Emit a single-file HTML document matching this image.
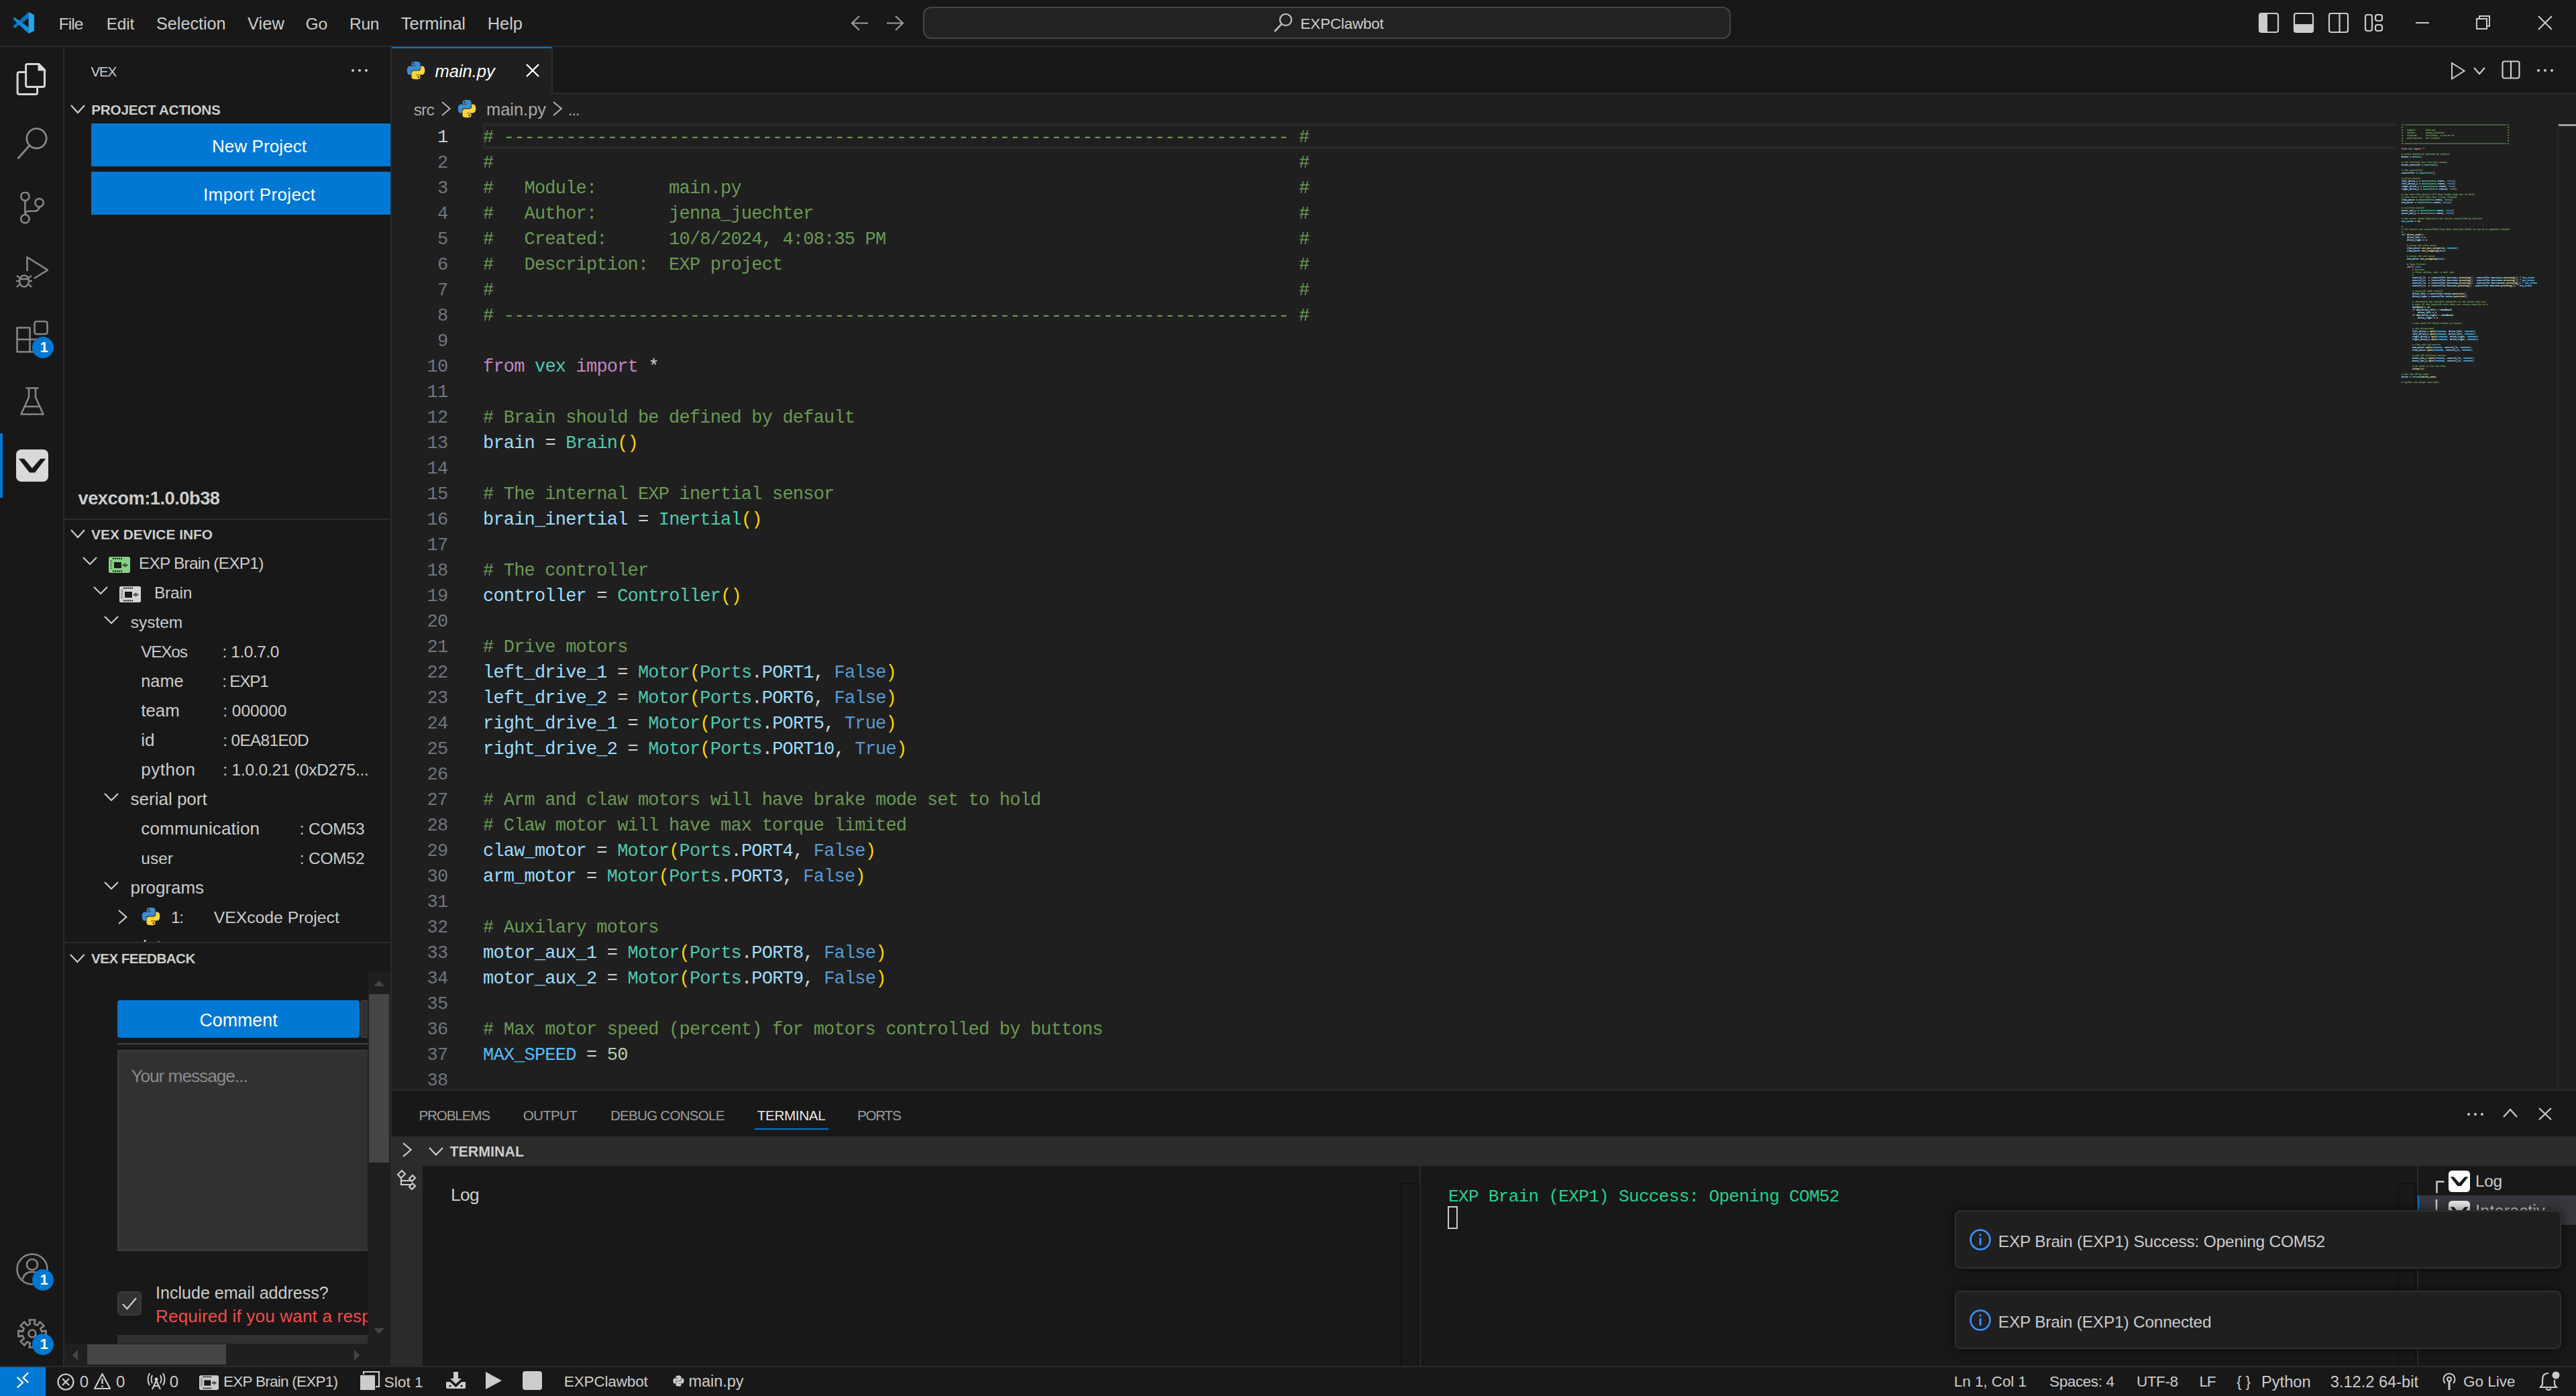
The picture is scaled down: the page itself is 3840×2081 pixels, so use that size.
<!DOCTYPE html><html><head><meta charset="utf-8"><style>
html,body{margin:0;padding:0;}
body{width:3840px;height:2081px;overflow:hidden;background:#181818;position:relative;}
.r{position:absolute;display:block;}
.t{position:absolute;white-space:pre;}
.s{font-family:"Liberation Sans",sans-serif;}
.m{font-family:"Liberation Mono",monospace;}
</style></head><body><div class="r" style="left:0px;top:0px;width:3840px;height:68px;background:#181818;"></div><div class="r" style="left:0px;top:68px;width:3840px;height:2px;background:#2b2b2b;"></div><svg class="r" style="left:14px;top:14px;" width="42" height="42" viewBox="0 0 42 42" fill="none">
      <polygon points="28.6,3.9 28.6,12.9 8,28 5.1,25.3" fill="#0a74c0"/>
      <polygon points="8,12 28.6,26.8 28.6,36 5.1,14.1" fill="#138ad9"/>
      <polygon points="28.6,3.9 36.9,8.1 36.9,31.9 28.6,36" fill="#23a4f0"/>
    </svg><div class="t s" style="left:87.80px;top:20.03px;font-size:24.44px;line-height:31px;color:#cccccc;letter-spacing:-0.967px;">File</div><div class="t s" style="left:158.70px;top:20.03px;font-size:24.44px;line-height:31px;color:#cccccc;letter-spacing:-0.150px;">Edit</div><div class="t s" style="left:233.00px;top:19.77px;font-size:25.19px;line-height:31px;color:#cccccc;letter-spacing:-0.006px;">Selection</div><div class="t s" style="left:369.00px;top:19.17px;font-size:25.47px;line-height:32px;color:#cccccc;letter-spacing:0.017px;">View</div><div class="t s" style="left:455.50px;top:19.98px;font-size:24.58px;line-height:31px;color:#cccccc;letter-spacing:0.000px;">Go</div><div class="t s" style="left:521.00px;top:20.03px;font-size:24.44px;line-height:31px;color:#cccccc;letter-spacing:-0.225px;">Run</div><div class="t s" style="left:597.80px;top:19.17px;font-size:25.46px;line-height:32px;color:#cccccc;letter-spacing:0.007px;">Terminal</div><div class="t s" style="left:726.80px;top:19.20px;font-size:25.39px;line-height:32px;color:#cccccc;letter-spacing:-0.017px;">Help</div><svg class="r" style="left:1268px;top:23px;" width="28" height="24" viewBox="0 0 28 24" fill="none"><path d="M13 1 L2 11.5 L13 22 M2 11.5 H26" stroke="#9d9d9d" stroke-width="2.2" fill="none"/></svg><svg class="r" style="left:1320px;top:23px;" width="28" height="24" viewBox="0 0 28 24" fill="none"><path d="M15 1 L26 11.5 L15 22 M26 11.5 H2" stroke="#9d9d9d" stroke-width="2.2" fill="none"/></svg><div class="r" style="left:1376px;top:10px;width:1200px;height:44px;background:#222222;border:2px solid #464646;border-radius:12px;"></div><svg class="r" style="left:1898px;top:18px;" width="30" height="32" viewBox="0 0 30 32" fill="none"><circle cx="18.6" cy="11.4" r="8.6" stroke="#bdbdbd" stroke-width="2.3"/><path d="M12.6 17.6 L2 29" stroke="#bdbdbd" stroke-width="2.6"/></svg><div class="t s" style="left:1938.60px;top:21.98px;font-size:22.56px;line-height:28px;color:#cccccc;letter-spacing:-0.267px;">EXPClawbot</div><svg class="r" style="left:3366px;top:18px;" width="32" height="32" viewBox="0 0 32 32" fill="none"><rect x="2" y="2" width="28" height="28" rx="3" stroke="#cccccc" stroke-width="2.2"/><rect x="2" y="2" width="12" height="28" rx="3" fill="#cccccc"/><rect x="8" y="2" width="6" height="28" fill="#cccccc"/></svg><svg class="r" style="left:3418px;top:18px;" width="32" height="32" viewBox="0 0 32 32" fill="none"><rect x="2" y="2" width="28" height="28" rx="3" stroke="#cccccc" stroke-width="2.2"/><rect x="2" y="18" width="28" height="12" rx="3" fill="#cccccc"/><rect x="2" y="18" width="28" height="6" fill="#cccccc"/></svg><svg class="r" style="left:3470px;top:18px;" width="32" height="32" viewBox="0 0 32 32" fill="none"><rect x="2" y="2" width="28" height="28" rx="3" stroke="#cccccc" stroke-width="2.2"/><path d="M17.5 2 V30" stroke="#cccccc" stroke-width="2.2"/></svg><svg class="r" style="left:3524px;top:18px;" width="30" height="32" viewBox="0 0 30 32" fill="none"><rect x="2" y="4" width="10" height="24" rx="3" stroke="#cccccc" stroke-width="2.2"/><rect x="17" y="4" width="10" height="9" rx="3" stroke="#cccccc" stroke-width="2.2"/><rect x="17" y="19" width="10" height="9" rx="3" stroke="#cccccc" stroke-width="2.2"/></svg><div class="r" style="left:3601px;top:33px;width:20px;height:2px;background:#cccccc;"></div><svg class="r" style="left:3690px;top:22px;" width="24" height="24" viewBox="0 0 24 24" fill="none"><rect x="2" y="6" width="15" height="15" stroke="#cccccc" stroke-width="2"/><path d="M6 6 V2 H21 V17 H17" stroke="#cccccc" stroke-width="2"/></svg><svg class="r" style="left:3782px;top:22px;" width="24" height="24" viewBox="0 0 24 24" fill="none"><path d="M2 2 L22 22 M22 2 L2 22" stroke="#cccccc" stroke-width="2"/></svg><div class="r" style="left:94px;top:70px;width:2px;height:1966px;background:#2b2b2b;"></div><svg class="r" style="left:24px;top:94px;" width="48" height="48" viewBox="0 0 48 48" fill="none"><path d="M17 1.6 H34 L42.5 10 V33 Q42.5 35.5 40 35.5 H17 Q14.6 35.5 14.6 33 V4 Q14.6 1.6 17 1.6 Z" stroke="#d7d7d7" stroke-width="3" stroke-linejoin="round"/>
      <path d="M33.5 1.6 V10.5 H42.5 Z" fill="#d7d7d7" stroke="#d7d7d7" stroke-width="2"/>
      <path d="M14.6 13.6 H5 Q2.1 13.6 2.1 16.5 V44.5 Q2.1 46.4 5 46.4 H29 Q31.6 46.4 31.6 44 V35.5" stroke="#d7d7d7" stroke-width="3"/></svg><svg class="r" style="left:24px;top:190px;" width="48" height="48" viewBox="0 0 48 48" fill="none"><circle cx="30.5" cy="16.3" r="14.7" stroke="#868686" stroke-width="2.8"/><path d="M20 27 L2.5 46.5" stroke="#868686" stroke-width="3"/></svg><svg class="r" style="left:24px;top:286px;" width="48" height="48" viewBox="0 0 48 48" fill="none"><circle cx="13.4" cy="6.9" r="6.2" stroke="#868686" stroke-width="2.6"/><circle cx="34.6" cy="16.3" r="6.2" stroke="#868686" stroke-width="2.6"/>
      <circle cx="13.4" cy="40.2" r="6.2" stroke="#868686" stroke-width="2.6"/><path d="M13.4 13.1 V34" stroke="#868686" stroke-width="2.6"/>
      <path d="M34.6 22.5 Q34 28.7 27 28.7 H19 Q13.4 28.7 13.4 34" stroke="#868686" stroke-width="2.6"/></svg><svg class="r" style="left:24px;top:382px;" width="48" height="48" viewBox="0 0 48 48" fill="none"><path d="M16.5 22 V1.5 L47 20.5 L27 33" stroke="#868686" stroke-width="2.6" stroke-linejoin="miter"/>
      <ellipse cx="12" cy="37" rx="7" ry="8.5" stroke="#868686" stroke-width="2.6"/><path d="M5 34 H19" stroke="#868686" stroke-width="2.6"/>
      <path d="M0 37 H4 M20 37 H24 M1 29 L5 32 M23 29 L19 32 M1 46 L5 42 M23 46 L19 42" stroke="#868686" stroke-width="2.4"/></svg><svg class="r" style="left:24px;top:478px;" width="48" height="48" viewBox="0 0 48 48" fill="none"><path d="M1.5 10.5 H20.5 V28 H38 V46.5 H1.5 Z M1.5 28 H20.5 V46.5" stroke="#868686" stroke-width="2.6" stroke-linejoin="round"/>
      <rect x="27.5" y="1" width="19" height="19" rx="3" stroke="#868686" stroke-width="2.6"/></svg><div class="r" style="left:48px;top:502px;width:32px;height:32px;border-radius:16px;background:#0078d4;"></div><div class="t s" style="left:59.50px;top:504.37px;font-size:22px;line-height:28px;color:#ffffff;font-weight:700;">1</div><svg class="r" style="left:24px;top:574px;" width="48" height="48" viewBox="0 0 48 48" fill="none"><path d="M14.5 4.5 H33.5 M19 4.5 V18 L7.5 43.5 H40.5 L29 18 V4.5" stroke="#868686" stroke-width="2.6" stroke-linejoin="round"/>
      <path d="M12 32 H36" stroke="#868686" stroke-width="2.6"/></svg><div class="r" style="left:0px;top:646px;width:4px;height:96px;background:#0078d4;"></div><svg class="r" style="left:24px;top:670px;" width="48" height="48" viewBox="0 0 48 48" fill="none"><rect x="0" y="0" width="48" height="48" rx="7.7" fill="#d9d9d9"/><path d="M3.9 13.8 H11.9 L23.9 27.9 L36.4 13.8 H44.1 L28 34.6 H20 Z" fill="#181818"/></svg><svg class="r" style="left:24px;top:1868px;" width="48" height="48" viewBox="0 0 48 48" fill="none"><circle cx="24" cy="24" r="22.5" stroke="#868686" stroke-width="2.6"/><circle cx="24" cy="17" r="8" stroke="#868686" stroke-width="2.6"/>
      <path d="M10 39 Q12 28 24 28 Q36 28 38 39" stroke="#868686" stroke-width="2.6"/></svg><div class="r" style="left:48px;top:1892px;width:32px;height:32px;border-radius:16px;background:#0078d4;"></div><div class="t s" style="left:59.50px;top:1894.37px;font-size:22px;line-height:28px;color:#ffffff;font-weight:700;">1</div><svg class="r" style="left:24px;top:1964px;" width="48" height="48" viewBox="0 0 48 48" fill="none"><polygon points="44.54,19.63 44.54,28.37 38.16,27.14 36.23,31.79 41.61,35.44 35.44,41.61 31.79,36.23 27.14,38.16 28.37,44.54 19.63,44.54 20.86,38.16 16.21,36.23 12.56,41.61 6.39,35.44 11.77,31.79 9.84,27.14 3.46,28.37 3.46,19.63 9.84,20.86 11.77,16.21 6.39,12.56 12.56,6.39 16.21,11.77 20.86,9.84 19.63,3.46 28.37,3.46 27.14,9.84 31.79,11.77 35.44,6.39 41.61,12.56 36.23,16.21 38.16,20.86" stroke="#868686" stroke-width="2.6" stroke-linejoin="round"/><circle cx="24" cy="24" r="5.5" stroke="#868686" stroke-width="2.6"/></svg><div class="r" style="left:48px;top:1988px;width:32px;height:32px;border-radius:16px;background:#0078d4;"></div><div class="t s" style="left:59.50px;top:1990.37px;font-size:22px;line-height:28px;color:#ffffff;font-weight:700;">1</div><div class="r" style="left:582px;top:70px;width:2px;height:1966px;background:#2b2b2b;"></div><div class="t s" style="left:135.60px;top:94.13px;font-size:20.68px;line-height:26px;color:#cccccc;letter-spacing:-1.300px;">VEX</div><div class="r" style="left:523.8px;top:102.8px;width:4.4px;height:4.4px;border-radius:50%;background:#cccccc;"></div><div class="r" style="left:533.8px;top:102.8px;width:4.4px;height:4.4px;border-radius:50%;background:#cccccc;"></div><div class="r" style="left:543.8px;top:102.8px;width:4.4px;height:4.4px;border-radius:50%;background:#cccccc;"></div><svg class="r" style="left:104px;top:155px;" width="24" height="15" viewBox="0 0 24 15" fill="none"><path d="M2 2 L12.0 13.0 L22.0 2" stroke="#cccccc" stroke-width="2.2" fill="none"/></svg><div class="t s" style="left:136.30px;top:151.33px;font-size:20.68px;line-height:26px;color:#cccccc;font-weight:700;letter-spacing:-0.229px;">PROJECT ACTIONS</div><div class="r" style="left:136px;top:184px;width:446px;height:64px;background:#0078d4;"></div><div class="t s" style="left:316.00px;top:201.99px;font-size:26px;line-height:32px;color:#ffffff;letter-spacing:0.085px;">New Project</div><div class="r" style="left:136px;top:256px;width:446px;height:64px;background:#0078d4;"></div><div class="t s" style="left:303.00px;top:273.99px;font-size:26px;line-height:32px;color:#ffffff;letter-spacing:0.396px;">Import Project</div><div class="t s" style="left:116.50px;top:726.05px;font-size:27.26px;line-height:34px;color:#cccccc;font-weight:700;letter-spacing:-0.475px;">vexcom:1.0.0b38</div><div class="r" style="left:96px;top:773px;width:486px;height:2px;background:#2b2b2b;"></div><svg class="r" style="left:104px;top:788px;" width="24" height="15" viewBox="0 0 24 15" fill="none"><path d="M2 2 L12.0 13.0 L22.0 2" stroke="#cccccc" stroke-width="2.2" fill="none"/></svg><div class="t s" style="left:136.10px;top:783.76px;font-size:20.89px;line-height:26px;color:#cccccc;font-weight:700;letter-spacing:-0.004px;">VEX DEVICE INFO</div><div class="r" style="left:0;top:819px;width:582px;height:585px;overflow:hidden;"><div class="r" style="left:0;top:-819px;width:582px;height:2081px;"><svg class="r" style="left:122px;top:829px;" width="24" height="14" viewBox="0 0 24 14" fill="none"><path d="M2 2 L12.0 12.0 L22.0 2" stroke="#cccccc" stroke-width="2.2" fill="none"/></svg><svg class="r" style="left:162px;top:830px;" width="32" height="24" viewBox="0 0 32 24" fill="none"><rect x="0" y="0" width="32" height="24" rx="2.5" fill="#89d185"/><rect x="6" y="1.6" width="2" height="2" fill="#111"/><rect x="6" y="20.4" width="2" height="2" fill="#111"/><rect x="9" y="1.6" width="2" height="2" fill="#111"/><rect x="9" y="20.4" width="2" height="2" fill="#111"/><rect x="12" y="1.6" width="2" height="2" fill="#111"/><rect x="12" y="20.4" width="2" height="2" fill="#111"/><rect x="15" y="1.6" width="2" height="2" fill="#111"/><rect x="15" y="20.4" width="2" height="2" fill="#111"/><rect x="18" y="1.6" width="2" height="2" fill="#111"/><rect x="18" y="20.4" width="2" height="2" fill="#111"/><rect x="2.2" y="5.0" width="3" height="1" fill="#555"/><rect x="2.2" y="7.4" width="3" height="1" fill="#555"/><rect x="2.2" y="9.8" width="3" height="1" fill="#555"/><rect x="2.2" y="12.2" width="3" height="1" fill="#555"/><rect x="2.2" y="14.6" width="3" height="1" fill="#555"/><rect x="2.2" y="17.0" width="3" height="1" fill="#555"/>
<rect x="8" y="8" width="11" height="9" fill="#1a1a1a"/>
<path d="M24.5 9.5 L26 11 L24.5 12.5 L23 11 Z M24.5 12.5 L26 14 L24.5 15.5 L23 14 Z M22 11 L23.5 12.5 L22 14 L20.5 12.5 Z M27 11 L28.5 12.5 L27 14 L25.5 12.5 Z" fill="#1a1a1a"/></svg><div class="t s" style="left:206.90px;top:824.03px;font-size:24.44px;line-height:31px;color:#cccccc;letter-spacing:-0.763px;">EXP Brain (EXP1)</div><svg class="r" style="left:138px;top:873px;" width="24" height="14" viewBox="0 0 24 14" fill="none"><path d="M2 2 L12.0 12.0 L22.0 2" stroke="#cccccc" stroke-width="2.2" fill="none"/></svg><svg class="r" style="left:178px;top:874px;" width="32" height="24" viewBox="0 0 32 24" fill="none"><rect x="0" y="0" width="32" height="24" rx="2.5" fill="#d4d4d4"/><rect x="6" y="1.6" width="2" height="2" fill="#111"/><rect x="6" y="20.4" width="2" height="2" fill="#111"/><rect x="9" y="1.6" width="2" height="2" fill="#111"/><rect x="9" y="20.4" width="2" height="2" fill="#111"/><rect x="12" y="1.6" width="2" height="2" fill="#111"/><rect x="12" y="20.4" width="2" height="2" fill="#111"/><rect x="15" y="1.6" width="2" height="2" fill="#111"/><rect x="15" y="20.4" width="2" height="2" fill="#111"/><rect x="18" y="1.6" width="2" height="2" fill="#111"/><rect x="18" y="20.4" width="2" height="2" fill="#111"/><rect x="2.2" y="5.0" width="3" height="1" fill="#555"/><rect x="2.2" y="7.4" width="3" height="1" fill="#555"/><rect x="2.2" y="9.8" width="3" height="1" fill="#555"/><rect x="2.2" y="12.2" width="3" height="1" fill="#555"/><rect x="2.2" y="14.6" width="3" height="1" fill="#555"/><rect x="2.2" y="17.0" width="3" height="1" fill="#555"/>
<rect x="8" y="8" width="11" height="9" fill="#1a1a1a"/>
<path d="M24.5 9.5 L26 11 L24.5 12.5 L23 11 Z M24.5 12.5 L26 14 L24.5 15.5 L23 14 Z M22 11 L23.5 12.5 L22 14 L20.5 12.5 Z M27 11 L28.5 12.5 L27 14 L25.5 12.5 Z" fill="#1a1a1a"/></svg><div class="t s" style="left:230.00px;top:868.03px;font-size:24.44px;line-height:31px;color:#cccccc;letter-spacing:-0.175px;">Brain</div><svg class="r" style="left:154px;top:917px;" width="24" height="14" viewBox="0 0 24 14" fill="none"><path d="M2 2 L12.0 12.0 L22.0 2" stroke="#cccccc" stroke-width="2.2" fill="none"/></svg><div class="t s" style="left:194.70px;top:912.01px;font-size:24.5px;line-height:31px;color:#cccccc;letter-spacing:0.000px;">system</div><div class="t s" style="left:210.30px;top:956.03px;font-size:24.44px;line-height:31px;color:#cccccc;letter-spacing:-1.288px;">VEXos</div><div class="t s" style="left:331.60px;top:956.03px;font-size:24.44px;line-height:31px;color:#cccccc;letter-spacing:-0.431px;">: 1.0.7.0</div><div class="t s" style="left:210.30px;top:999.24px;font-size:25.26px;line-height:32px;color:#cccccc;letter-spacing:0.017px;">name</div><div class="t s" style="left:331.35px;top:1000.03px;font-size:24.44px;line-height:31px;color:#cccccc;letter-spacing:-1.300px;">: EXP1</div><div class="t s" style="left:210.30px;top:1043.05px;font-size:25.82px;line-height:32px;color:#cccccc;letter-spacing:0.017px;">team</div><div class="t s" style="left:332.30px;top:1044.03px;font-size:24.44px;line-height:31px;color:#cccccc;letter-spacing:-0.007px;">: 000000</div><div class="t s" style="left:210.30px;top:1086.99px;font-size:26px;line-height:32px;color:#cccccc;letter-spacing:0.050px;">id</div><div class="t s" style="left:332.30px;top:1088.03px;font-size:24.44px;line-height:31px;color:#cccccc;letter-spacing:-0.694px;">: 0EA81E0D</div><div class="t s" style="left:210.30px;top:1130.99px;font-size:26px;line-height:32px;color:#cccccc;letter-spacing:0.530px;">python</div><div class="t s" style="left:332.30px;top:1132.03px;font-size:24.44px;line-height:31px;color:#cccccc;letter-spacing:-0.193px;">: 1.0.0.21 (0xD275...</div><svg class="r" style="left:154px;top:1181px;" width="24" height="14" viewBox="0 0 24 14" fill="none"><path d="M2 2 L12.0 12.0 L22.0 2" stroke="#cccccc" stroke-width="2.2" fill="none"/></svg><div class="t s" style="left:194.50px;top:1174.99px;font-size:26px;line-height:32px;color:#cccccc;letter-spacing:0.005px;">serial port</div><div class="t s" style="left:210.30px;top:1218.99px;font-size:26px;line-height:32px;color:#cccccc;letter-spacing:0.154px;">communication</div><div class="t s" style="left:446.80px;top:1220.03px;font-size:24.44px;line-height:31px;color:#cccccc;letter-spacing:-0.183px;">: COM53</div><div class="t s" style="left:210.30px;top:1264.00px;font-size:24.51px;line-height:31px;color:#cccccc;letter-spacing:0.017px;">user</div><div class="t s" style="left:446.80px;top:1264.03px;font-size:24.44px;line-height:31px;color:#cccccc;letter-spacing:-0.183px;">: COM52</div><svg class="r" style="left:154px;top:1313px;" width="24" height="14" viewBox="0 0 24 14" fill="none"><path d="M2 2 L12.0 12.0 L22.0 2" stroke="#cccccc" stroke-width="2.2" fill="none"/></svg><div class="t s" style="left:194.50px;top:1307.02px;font-size:25.91px;line-height:32px;color:#cccccc;letter-spacing:-0.000px;">programs</div><svg class="r" style="left:175px;top:1355px;" width="15" height="24" viewBox="0 0 15 24" fill="none"><path d="M2 2 L13.3 12.0 L2 22.0" stroke="#cccccc" stroke-width="2.2" fill="none"/></svg><svg class="r" style="left:211px;top:1352px;" width="28" height="28" viewBox="0 0 24 24" fill="none">
<path d="M11.9 0.6C6.1 0.6 6.5 3.1 6.5 3.1V5.7H12V6.5H4.3C4.3 6.5 0.6 6.1 0.6 11.9C0.6 17.7 3.8 17.5 3.8 17.5H5.8V14.8C5.8 14.8 5.7 11.6 9 11.6H14.5C14.5 11.6 17.6 11.6 17.6 8.6V3.6C17.6 3.6 18 0.6 11.9 0.6ZM8.9 2.3A1 1 0 1 1 8.9 4.3A1 1 0 1 1 8.9 2.3Z" fill="#3c8dcf"/>
<path d="M12.1 23.4C17.9 23.4 17.5 20.9 17.5 20.9V18.3H12V17.5H19.7C19.7 17.5 23.4 17.9 23.4 12.1C23.4 6.3 20.2 6.5 20.2 6.5H18.2V9.2C18.2 9.2 18.3 12.4 15 12.4H9.5C9.5 12.4 6.4 12.4 6.4 15.4V20.4C6.4 20.4 6 23.4 12.1 23.4ZM15.1 21.7A1 1 0 1 1 15.1 19.7A1 1 0 1 1 15.1 21.7Z" fill="#ffd43b"/>
</svg><div class="t s" style="left:254.95px;top:1352.03px;font-size:24.44px;line-height:31px;color:#cccccc;letter-spacing:-1.300px;">1:</div><div class="t s" style="left:318.70px;top:1351.92px;font-size:24.75px;line-height:31px;color:#cccccc;letter-spacing:0.000px;">VEXcode Project</div><div class="t s" style="left:200.00px;top:1394.99px;font-size:26px;line-height:32px;color:#cccccc;">slot</div></div></div><div class="r" style="left:96px;top:1404px;width:486px;height:2px;background:#2b2b2b;"></div><svg class="r" style="left:103px;top:1421px;" width="24" height="15" viewBox="0 0 24 15" fill="none"><path d="M2 2 L12.3 13.0 L22.6 2" stroke="#cccccc" stroke-width="2.2" fill="none"/></svg><div class="t s" style="left:136.00px;top:1415.83px;font-size:20.68px;line-height:26px;color:#cccccc;font-weight:700;letter-spacing:-0.600px;">VEX FEEDBACK</div><div class="r" style="left:96px;top:1448px;width:452px;height:555px;overflow:hidden;"><div class="r" style="left:-96px;top:-1448px;width:582px;height:2081px;"><div class="r" style="left:175px;top:1491px;width:361px;height:56px;background:#0078d4;border-radius:4px;"></div><div class="t s" style="left:297.50px;top:1505.22px;font-size:26.77px;line-height:33px;color:#ffffff;letter-spacing:0.008px;">Comment</div><div class="r" style="left:537px;top:1491px;width:30px;height:52px;background:#313131;border:2px solid #3c3c3c;border-radius:4px;"></div><div class="r" style="left:175px;top:1555px;width:373px;height:2px;background:#454545;"></div><div class="r" style="left:175px;top:1565px;width:400px;height:296px;background:#313131;border:2px solid #3c3c3c;"></div><div class="t s" style="left:195.40px;top:1588.38px;font-size:26.32px;line-height:33px;color:#8b8b8b;letter-spacing:-1.057px;">Your message...</div><div class="r" style="left:175px;top:1925px;width:32px;height:32px;background:#313131;border:2px solid #3c3c3c;border-radius:6px;"></div><svg class="r" style="left:179px;top:1929px;" width="28" height="28" viewBox="0 0 28 28" fill="none"><path d="M4 15 L10.5 22 L24 6" stroke="#cccccc" stroke-width="2.2" fill="none"/></svg><div class="t s" style="left:232.00px;top:1911.80px;font-size:25.09px;line-height:31px;color:#cccccc;letter-spacing:-0.005px;">Include email address?</div><div class="t s" style="left:232.00px;top:1946.49px;font-size:26px;line-height:32px;color:#f14c4c;letter-spacing:0.2px;">Required if you want a response</div><div class="r" style="left:175px;top:1990px;width:425px;height:13px;background:#313131;"></div></div></div><div class="r" style="left:548px;top:1448px;width:34px;height:555px;background:#1f1f1f;"></div><svg class="r" style="left:556px;top:1461px;" width="18" height="10" viewBox="0 0 18 10" fill="none"><path d="M1 9 L9 1 L17 9 Z" fill="#454545"/></svg><div class="r" style="left:550px;top:1482px;width:30px;height:251px;background:#454545;"></div><svg class="r" style="left:556px;top:1979px;" width="18" height="10" viewBox="0 0 18 10" fill="none"><path d="M1 1 L9 9 L17 1 Z" fill="#454545"/></svg><div class="r" style="left:96px;top:2003px;width:452px;height:33px;background:#1f1f1f;"></div><div class="r" style="left:130px;top:2004px;width:207px;height:30px;background:#454545;"></div><svg class="r" style="left:107px;top:2011px;" width="10" height="18" viewBox="0 0 10 18" fill="none"><path d="M9 1 L1 9 L9 17 Z" fill="#454545"/></svg><svg class="r" style="left:527px;top:2011px;" width="10" height="18" viewBox="0 0 10 18" fill="none"><path d="M1 1 L9 9 L1 17 Z" fill="#454545"/></svg><div class="r" style="left:548px;top:2003px;width:34px;height:33px;background:#1f1f1f;"></div><div class="r" style="left:584px;top:70px;width:3256px;height:68px;background:#181818;"></div><div class="r" style="left:584px;top:138px;width:3256px;height:2px;background:#2b2b2b;"></div><div class="r" style="left:584px;top:70px;width:238px;height:70px;background:#1f1f1f;"></div><div class="r" style="left:584px;top:70px;width:238px;height:2px;background:#0078d4;"></div><div class="r" style="left:822px;top:70px;width:2px;height:68px;background:#2b2b2b;"></div><svg class="r" style="left:606px;top:91px;" width="28" height="28" viewBox="0 0 24 24" fill="none">
<path d="M11.9 0.6C6.1 0.6 6.5 3.1 6.5 3.1V5.7H12V6.5H4.3C4.3 6.5 0.6 6.1 0.6 11.9C0.6 17.7 3.8 17.5 3.8 17.5H5.8V14.8C5.8 14.8 5.7 11.6 9 11.6H14.5C14.5 11.6 17.6 11.6 17.6 8.6V3.6C17.6 3.6 18 0.6 11.9 0.6ZM8.9 2.3A1 1 0 1 1 8.9 4.3A1 1 0 1 1 8.9 2.3Z" fill="#3c8dcf"/>
<path d="M12.1 23.4C17.9 23.4 17.5 20.9 17.5 20.9V18.3H12V17.5H19.7C19.7 17.5 23.4 17.9 23.4 12.1C23.4 6.3 20.2 6.5 20.2 6.5H18.2V9.2C18.2 9.2 18.3 12.4 15 12.4H9.5C9.5 12.4 6.4 12.4 6.4 15.4V20.4C6.4 20.4 6 23.4 12.1 23.4ZM15.1 21.7A1 1 0 1 1 15.1 19.7A1 1 0 1 1 15.1 21.7Z" fill="#ffd43b"/>
</svg><div class="t s" style="left:648.50px;top:89.77px;font-size:25.47px;line-height:32px;color:#ffffff;font-style:italic;letter-spacing:0.008px;">main.py</div><svg class="r" style="left:783px;top:94px;" width="22" height="22" viewBox="0 0 22 22" fill="none"><path d="M2 2 L20 20 M20 2 L2 20" stroke="#ffffff" stroke-width="2.4"/></svg><svg class="r" style="left:3651px;top:91px;" width="26" height="30" viewBox="0 0 26 30" fill="none"><path d="M4 3 V26.5 L22.5 14.75 Z" stroke="#cccccc" stroke-width="2" stroke-linejoin="miter" fill="none"/></svg><svg class="r" style="left:3686px;top:99px;" width="20" height="13" viewBox="0 0 20 13" fill="none"><path d="M2 2 L10.0 11.0 L18.0 2" stroke="#cccccc" stroke-width="2.2" fill="none"/></svg><svg class="r" style="left:3728px;top:89px;" width="30" height="30" viewBox="0 0 30 30" fill="none"><rect x="2.5" y="2.5" width="25" height="25" rx="3" stroke="#cccccc" stroke-width="2.2"/><path d="M15 2.5 V27.5" stroke="#cccccc" stroke-width="2.2"/></svg><div class="r" style="left:3781.8px;top:102.8px;width:4.4px;height:4.4px;border-radius:50%;background:#cccccc;"></div><div class="r" style="left:3791.8px;top:102.8px;width:4.4px;height:4.4px;border-radius:50%;background:#cccccc;"></div><div class="r" style="left:3801.8px;top:102.8px;width:4.4px;height:4.4px;border-radius:50%;background:#cccccc;"></div><div class="r" style="left:584px;top:140px;width:3256px;height:44px;background:#1f1f1f;"></div><div class="t s" style="left:616.70px;top:148.03px;font-size:24.44px;line-height:31px;color:#a9a9a9;letter-spacing:-0.800px;">src</div><svg class="r" style="left:657px;top:150px;" width="15" height="24" viewBox="0 0 15 24" fill="none"><path d="M2 2 L13.5 12.0 L2 22.0" stroke="#a9a9a9" stroke-width="2.2" fill="none"/></svg><svg class="r" style="left:682px;top:148px;" width="28" height="28" viewBox="0 0 24 24" fill="none">
<path d="M11.9 0.6C6.1 0.6 6.5 3.1 6.5 3.1V5.7H12V6.5H4.3C4.3 6.5 0.6 6.1 0.6 11.9C0.6 17.7 3.8 17.5 3.8 17.5H5.8V14.8C5.8 14.8 5.7 11.6 9 11.6H14.5C14.5 11.6 17.6 11.6 17.6 8.6V3.6C17.6 3.6 18 0.6 11.9 0.6ZM8.9 2.3A1 1 0 1 1 8.9 4.3A1 1 0 1 1 8.9 2.3Z" fill="#3c8dcf"/>
<path d="M12.1 23.4C17.9 23.4 17.5 20.9 17.5 20.9V18.3H12V17.5H19.7C19.7 17.5 23.4 17.9 23.4 12.1C23.4 6.3 20.2 6.5 20.2 6.5H18.2V9.2C18.2 9.2 18.3 12.4 15 12.4H9.5C9.5 12.4 6.4 12.4 6.4 15.4V20.4C6.4 20.4 6 23.4 12.1 23.4ZM15.1 21.7A1 1 0 1 1 15.1 19.7A1 1 0 1 1 15.1 21.7Z" fill="#ffd43b"/>
</svg><div class="t s" style="left:725.00px;top:147.19px;font-size:25.41px;line-height:32px;color:#a9a9a9;letter-spacing:0.008px;">main.py</div><svg class="r" style="left:823px;top:150px;" width="15" height="24" viewBox="0 0 15 24" fill="none"><path d="M2 2 L13.8 12.0 L2 22.0" stroke="#a9a9a9" stroke-width="2.2" fill="none"/></svg><div class="t s" style="left:846.80px;top:148.03px;font-size:24.44px;line-height:31px;color:#a9a9a9;letter-spacing:-1.300px;">...</div><div class="r" style="left:584px;top:184px;width:3256px;height:1440px;background:#1f1f1f;"></div><div class="r" style="left:720px;top:184px;width:2870px;height:30px;border:4px solid #282828;"></div><div class="r" style="left:584px;top:184px;width:2988px;height:1440px;overflow:hidden;"><div class="r" style="left:-584px;top:-184px;width:3840px;height:2081px;"><div class="t m" style="left:651.90px;top:185.81px;font-size:27px;line-height:38px;letter-spacing:-0.808px;color:#cccccc">1</div><div class="t m" style="left:720px;top:185.81px;font-size:27px;line-height:38px;letter-spacing:-0.808px;"><span style="color:#6a9955"># ---------------------------------------------------------------------------- #</span></div><div class="t m" style="left:651.90px;top:223.81px;font-size:27px;line-height:38px;letter-spacing:-0.808px;color:#6e7681">2</div><div class="t m" style="left:720px;top:223.81px;font-size:27px;line-height:38px;letter-spacing:-0.808px;"><span style="color:#6a9955">#                                                                              #</span></div><div class="t m" style="left:651.90px;top:261.81px;font-size:27px;line-height:38px;letter-spacing:-0.808px;color:#6e7681">3</div><div class="t m" style="left:720px;top:261.81px;font-size:27px;line-height:38px;letter-spacing:-0.808px;"><span style="color:#6a9955">#   Module:       main.py                                                      #</span></div><div class="t m" style="left:651.90px;top:299.81px;font-size:27px;line-height:38px;letter-spacing:-0.808px;color:#6e7681">4</div><div class="t m" style="left:720px;top:299.81px;font-size:27px;line-height:38px;letter-spacing:-0.808px;"><span style="color:#6a9955">#   Author:       jenna_juechter                                               #</span></div><div class="t m" style="left:651.90px;top:337.81px;font-size:27px;line-height:38px;letter-spacing:-0.808px;color:#6e7681">5</div><div class="t m" style="left:720px;top:337.81px;font-size:27px;line-height:38px;letter-spacing:-0.808px;"><span style="color:#6a9955">#   Created:      10/8/2024, 4:08:35 PM                                        #</span></div><div class="t m" style="left:651.90px;top:375.81px;font-size:27px;line-height:38px;letter-spacing:-0.808px;color:#6e7681">6</div><div class="t m" style="left:720px;top:375.81px;font-size:27px;line-height:38px;letter-spacing:-0.808px;"><span style="color:#6a9955">#   Description:  EXP project                                                  #</span></div><div class="t m" style="left:651.90px;top:413.81px;font-size:27px;line-height:38px;letter-spacing:-0.808px;color:#6e7681">7</div><div class="t m" style="left:720px;top:413.81px;font-size:27px;line-height:38px;letter-spacing:-0.808px;"><span style="color:#6a9955">#                                                                              #</span></div><div class="t m" style="left:651.90px;top:451.81px;font-size:27px;line-height:38px;letter-spacing:-0.808px;color:#6e7681">8</div><div class="t m" style="left:720px;top:451.81px;font-size:27px;line-height:38px;letter-spacing:-0.808px;"><span style="color:#6a9955"># ---------------------------------------------------------------------------- #</span></div><div class="t m" style="left:651.90px;top:489.81px;font-size:27px;line-height:38px;letter-spacing:-0.808px;color:#6e7681">9</div><div class="t m" style="left:636.51px;top:527.81px;font-size:27px;line-height:38px;letter-spacing:-0.808px;color:#6e7681">10</div><div class="t m" style="left:720px;top:527.81px;font-size:27px;line-height:38px;letter-spacing:-0.808px;"><span style="color:#c586c0">from</span> <span style="color:#4ec9b0">vex</span> <span style="color:#c586c0">import</span> <span style="color:#d4d4d4">*</span></div><div class="t m" style="left:636.51px;top:565.81px;font-size:27px;line-height:38px;letter-spacing:-0.808px;color:#6e7681">11</div><div class="t m" style="left:636.51px;top:603.81px;font-size:27px;line-height:38px;letter-spacing:-0.808px;color:#6e7681">12</div><div class="t m" style="left:720px;top:603.81px;font-size:27px;line-height:38px;letter-spacing:-0.808px;"><span style="color:#6a9955"># Brain should be defined by default</span></div><div class="t m" style="left:636.51px;top:641.81px;font-size:27px;line-height:38px;letter-spacing:-0.808px;color:#6e7681">13</div><div class="t m" style="left:720px;top:641.81px;font-size:27px;line-height:38px;letter-spacing:-0.808px;"><span style="color:#9cdcfe">brain</span> <span style="color:#d4d4d4">=</span> <span style="color:#4ec9b0">Brain</span><span style="color:#ffd700">(</span><span style="color:#ffd700">)</span></div><div class="t m" style="left:636.51px;top:679.81px;font-size:27px;line-height:38px;letter-spacing:-0.808px;color:#6e7681">14</div><div class="t m" style="left:636.51px;top:717.81px;font-size:27px;line-height:38px;letter-spacing:-0.808px;color:#6e7681">15</div><div class="t m" style="left:720px;top:717.81px;font-size:27px;line-height:38px;letter-spacing:-0.808px;"><span style="color:#6a9955"># The internal EXP inertial sensor</span></div><div class="t m" style="left:636.51px;top:755.81px;font-size:27px;line-height:38px;letter-spacing:-0.808px;color:#6e7681">16</div><div class="t m" style="left:720px;top:755.81px;font-size:27px;line-height:38px;letter-spacing:-0.808px;"><span style="color:#9cdcfe">brain_inertial</span> <span style="color:#d4d4d4">=</span> <span style="color:#4ec9b0">Inertial</span><span style="color:#ffd700">(</span><span style="color:#ffd700">)</span></div><div class="t m" style="left:636.51px;top:793.81px;font-size:27px;line-height:38px;letter-spacing:-0.808px;color:#6e7681">17</div><div class="t m" style="left:636.51px;top:831.81px;font-size:27px;line-height:38px;letter-spacing:-0.808px;color:#6e7681">18</div><div class="t m" style="left:720px;top:831.81px;font-size:27px;line-height:38px;letter-spacing:-0.808px;"><span style="color:#6a9955"># The controller</span></div><div class="t m" style="left:636.51px;top:869.81px;font-size:27px;line-height:38px;letter-spacing:-0.808px;color:#6e7681">19</div><div class="t m" style="left:720px;top:869.81px;font-size:27px;line-height:38px;letter-spacing:-0.808px;"><span style="color:#9cdcfe">controller</span> <span style="color:#d4d4d4">=</span> <span style="color:#4ec9b0">Controller</span><span style="color:#ffd700">(</span><span style="color:#ffd700">)</span></div><div class="t m" style="left:636.51px;top:907.81px;font-size:27px;line-height:38px;letter-spacing:-0.808px;color:#6e7681">20</div><div class="t m" style="left:636.51px;top:945.81px;font-size:27px;line-height:38px;letter-spacing:-0.808px;color:#6e7681">21</div><div class="t m" style="left:720px;top:945.81px;font-size:27px;line-height:38px;letter-spacing:-0.808px;"><span style="color:#6a9955"># Drive motors</span></div><div class="t m" style="left:636.51px;top:983.81px;font-size:27px;line-height:38px;letter-spacing:-0.808px;color:#6e7681">22</div><div class="t m" style="left:720px;top:983.81px;font-size:27px;line-height:38px;letter-spacing:-0.808px;"><span style="color:#9cdcfe">left_drive_1</span> <span style="color:#d4d4d4">=</span> <span style="color:#4ec9b0">Motor</span><span style="color:#ffd700">(</span><span style="color:#4ec9b0">Ports</span><span style="color:#d4d4d4">.</span><span style="color:#9cdcfe">PORT1</span><span style="color:#d4d4d4">,</span> <span style="color:#569cd6">False</span><span style="color:#ffd700">)</span></div><div class="t m" style="left:636.51px;top:1021.81px;font-size:27px;line-height:38px;letter-spacing:-0.808px;color:#6e7681">23</div><div class="t m" style="left:720px;top:1021.81px;font-size:27px;line-height:38px;letter-spacing:-0.808px;"><span style="color:#9cdcfe">left_drive_2</span> <span style="color:#d4d4d4">=</span> <span style="color:#4ec9b0">Motor</span><span style="color:#ffd700">(</span><span style="color:#4ec9b0">Ports</span><span style="color:#d4d4d4">.</span><span style="color:#9cdcfe">PORT6</span><span style="color:#d4d4d4">,</span> <span style="color:#569cd6">False</span><span style="color:#ffd700">)</span></div><div class="t m" style="left:636.51px;top:1059.81px;font-size:27px;line-height:38px;letter-spacing:-0.808px;color:#6e7681">24</div><div class="t m" style="left:720px;top:1059.81px;font-size:27px;line-height:38px;letter-spacing:-0.808px;"><span style="color:#9cdcfe">right_drive_1</span> <span style="color:#d4d4d4">=</span> <span style="color:#4ec9b0">Motor</span><span style="color:#ffd700">(</span><span style="color:#4ec9b0">Ports</span><span style="color:#d4d4d4">.</span><span style="color:#9cdcfe">PORT5</span><span style="color:#d4d4d4">,</span> <span style="color:#569cd6">True</span><span style="color:#ffd700">)</span></div><div class="t m" style="left:636.51px;top:1097.81px;font-size:27px;line-height:38px;letter-spacing:-0.808px;color:#6e7681">25</div><div class="t m" style="left:720px;top:1097.81px;font-size:27px;line-height:38px;letter-spacing:-0.808px;"><span style="color:#9cdcfe">right_drive_2</span> <span style="color:#d4d4d4">=</span> <span style="color:#4ec9b0">Motor</span><span style="color:#ffd700">(</span><span style="color:#4ec9b0">Ports</span><span style="color:#d4d4d4">.</span><span style="color:#9cdcfe">PORT10</span><span style="color:#d4d4d4">,</span> <span style="color:#569cd6">True</span><span style="color:#ffd700">)</span></div><div class="t m" style="left:636.51px;top:1135.81px;font-size:27px;line-height:38px;letter-spacing:-0.808px;color:#6e7681">26</div><div class="t m" style="left:636.51px;top:1173.81px;font-size:27px;line-height:38px;letter-spacing:-0.808px;color:#6e7681">27</div><div class="t m" style="left:720px;top:1173.81px;font-size:27px;line-height:38px;letter-spacing:-0.808px;"><span style="color:#6a9955"># Arm and claw motors will have brake mode set to hold</span></div><div class="t m" style="left:636.51px;top:1211.81px;font-size:27px;line-height:38px;letter-spacing:-0.808px;color:#6e7681">28</div><div class="t m" style="left:720px;top:1211.81px;font-size:27px;line-height:38px;letter-spacing:-0.808px;"><span style="color:#6a9955"># Claw motor will have max torque limited</span></div><div class="t m" style="left:636.51px;top:1249.81px;font-size:27px;line-height:38px;letter-spacing:-0.808px;color:#6e7681">29</div><div class="t m" style="left:720px;top:1249.81px;font-size:27px;line-height:38px;letter-spacing:-0.808px;"><span style="color:#9cdcfe">claw_motor</span> <span style="color:#d4d4d4">=</span> <span style="color:#4ec9b0">Motor</span><span style="color:#ffd700">(</span><span style="color:#4ec9b0">Ports</span><span style="color:#d4d4d4">.</span><span style="color:#9cdcfe">PORT4</span><span style="color:#d4d4d4">,</span> <span style="color:#569cd6">False</span><span style="color:#ffd700">)</span></div><div class="t m" style="left:636.51px;top:1287.81px;font-size:27px;line-height:38px;letter-spacing:-0.808px;color:#6e7681">30</div><div class="t m" style="left:720px;top:1287.81px;font-size:27px;line-height:38px;letter-spacing:-0.808px;"><span style="color:#9cdcfe">arm_motor</span> <span style="color:#d4d4d4">=</span> <span style="color:#4ec9b0">Motor</span><span style="color:#ffd700">(</span><span style="color:#4ec9b0">Ports</span><span style="color:#d4d4d4">.</span><span style="color:#9cdcfe">PORT3</span><span style="color:#d4d4d4">,</span> <span style="color:#569cd6">False</span><span style="color:#ffd700">)</span></div><div class="t m" style="left:636.51px;top:1325.81px;font-size:27px;line-height:38px;letter-spacing:-0.808px;color:#6e7681">31</div><div class="t m" style="left:636.51px;top:1363.81px;font-size:27px;line-height:38px;letter-spacing:-0.808px;color:#6e7681">32</div><div class="t m" style="left:720px;top:1363.81px;font-size:27px;line-height:38px;letter-spacing:-0.808px;"><span style="color:#6a9955"># Auxilary motors</span></div><div class="t m" style="left:636.51px;top:1401.81px;font-size:27px;line-height:38px;letter-spacing:-0.808px;color:#6e7681">33</div><div class="t m" style="left:720px;top:1401.81px;font-size:27px;line-height:38px;letter-spacing:-0.808px;"><span style="color:#9cdcfe">motor_aux_1</span> <span style="color:#d4d4d4">=</span> <span style="color:#4ec9b0">Motor</span><span style="color:#ffd700">(</span><span style="color:#4ec9b0">Ports</span><span style="color:#d4d4d4">.</span><span style="color:#9cdcfe">PORT8</span><span style="color:#d4d4d4">,</span> <span style="color:#569cd6">False</span><span style="color:#ffd700">)</span></div><div class="t m" style="left:636.51px;top:1439.81px;font-size:27px;line-height:38px;letter-spacing:-0.808px;color:#6e7681">34</div><div class="t m" style="left:720px;top:1439.81px;font-size:27px;line-height:38px;letter-spacing:-0.808px;"><span style="color:#9cdcfe">motor_aux_2</span> <span style="color:#d4d4d4">=</span> <span style="color:#4ec9b0">Motor</span><span style="color:#ffd700">(</span><span style="color:#4ec9b0">Ports</span><span style="color:#d4d4d4">.</span><span style="color:#9cdcfe">PORT9</span><span style="color:#d4d4d4">,</span> <span style="color:#569cd6">False</span><span style="color:#ffd700">)</span></div><div class="t m" style="left:636.51px;top:1477.81px;font-size:27px;line-height:38px;letter-spacing:-0.808px;color:#6e7681">35</div><div class="t m" style="left:636.51px;top:1515.81px;font-size:27px;line-height:38px;letter-spacing:-0.808px;color:#6e7681">36</div><div class="t m" style="left:720px;top:1515.81px;font-size:27px;line-height:38px;letter-spacing:-0.808px;"><span style="color:#6a9955"># Max motor speed (percent) for motors controlled by buttons</span></div><div class="t m" style="left:636.51px;top:1553.81px;font-size:27px;line-height:38px;letter-spacing:-0.808px;color:#6e7681">37</div><div class="t m" style="left:720px;top:1553.81px;font-size:27px;line-height:38px;letter-spacing:-0.808px;"><span style="color:#4fc1ff">MAX_SPEED</span> <span style="color:#d4d4d4">=</span> <span style="color:#b5cea8">50</span></div><div class="t m" style="left:636.51px;top:1591.81px;font-size:27px;line-height:38px;letter-spacing:-0.808px;color:#6e7681">38</div></div></div><div class="r" style="left:3572px;top:184px;width:240px;height:1440px;background:#1f1f1f;"></div><div class="t m" style="left:3580px;top:184px;font-size:33.33px;line-height:40px;letter-spacing:0px;transform:scale(0.1);transform-origin:0 0;font-weight:700;opacity:1;-webkit-text-stroke:1.2px currentColor;"><span style="color:#6a9955"># ---------------------------------------------------------------------------- #</span>
<span style="color:#6a9955">#                                                                              #</span>
<span style="color:#6a9955">#   Module:       main.py                                                      #</span>
<span style="color:#6a9955">#   Author:       jenna_juechter                                               #</span>
<span style="color:#6a9955">#   Created:      10/8/2024, 4:08:35 PM                                        #</span>
<span style="color:#6a9955">#   Description:  EXP project                                                  #</span>
<span style="color:#6a9955">#                                                                              #</span>
<span style="color:#6a9955"># ---------------------------------------------------------------------------- #</span>

<span style="color:#c586c0">from</span> <span style="color:#4ec9b0">vex</span> <span style="color:#c586c0">import</span> <span style="color:#d4d4d4">*</span>

<span style="color:#6a9955"># Brain should be defined by default</span>
<span style="color:#9cdcfe">brain</span> <span style="color:#d4d4d4">=</span> <span style="color:#4ec9b0">Brain</span><span style="color:#a0a0a0">(</span><span style="color:#a0a0a0">)</span>

<span style="color:#6a9955"># The internal EXP inertial sensor</span>
<span style="color:#9cdcfe">brain_inertial</span> <span style="color:#d4d4d4">=</span> <span style="color:#4ec9b0">Inertial</span><span style="color:#a0a0a0">(</span><span style="color:#a0a0a0">)</span>

<span style="color:#6a9955"># The controller</span>
<span style="color:#9cdcfe">controller</span> <span style="color:#d4d4d4">=</span> <span style="color:#4ec9b0">Controller</span><span style="color:#a0a0a0">(</span><span style="color:#a0a0a0">)</span>

<span style="color:#6a9955"># Drive motors</span>
<span style="color:#9cdcfe">left_drive_1</span> <span style="color:#d4d4d4">=</span> <span style="color:#4ec9b0">Motor</span><span style="color:#a0a0a0">(</span><span style="color:#4ec9b0">Ports</span><span style="color:#d4d4d4">.</span><span style="color:#9cdcfe">PORT1</span><span style="color:#d4d4d4">,</span> <span style="color:#569cd6">False</span><span style="color:#a0a0a0">)</span>
<span style="color:#9cdcfe">left_drive_2</span> <span style="color:#d4d4d4">=</span> <span style="color:#4ec9b0">Motor</span><span style="color:#a0a0a0">(</span><span style="color:#4ec9b0">Ports</span><span style="color:#d4d4d4">.</span><span style="color:#9cdcfe">PORT6</span><span style="color:#d4d4d4">,</span> <span style="color:#569cd6">False</span><span style="color:#a0a0a0">)</span>
<span style="color:#9cdcfe">right_drive_1</span> <span style="color:#d4d4d4">=</span> <span style="color:#4ec9b0">Motor</span><span style="color:#a0a0a0">(</span><span style="color:#4ec9b0">Ports</span><span style="color:#d4d4d4">.</span><span style="color:#9cdcfe">PORT5</span><span style="color:#d4d4d4">,</span> <span style="color:#569cd6">True</span><span style="color:#a0a0a0">)</span>
<span style="color:#9cdcfe">right_drive_2</span> <span style="color:#d4d4d4">=</span> <span style="color:#4ec9b0">Motor</span><span style="color:#a0a0a0">(</span><span style="color:#4ec9b0">Ports</span><span style="color:#d4d4d4">.</span><span style="color:#9cdcfe">PORT10</span><span style="color:#d4d4d4">,</span> <span style="color:#569cd6">True</span><span style="color:#a0a0a0">)</span>

<span style="color:#6a9955"># Arm and claw motors will have brake mode set to hold</span>
<span style="color:#6a9955"># Claw motor will have max torque limited</span>
<span style="color:#9cdcfe">claw_motor</span> <span style="color:#d4d4d4">=</span> <span style="color:#4ec9b0">Motor</span><span style="color:#a0a0a0">(</span><span style="color:#4ec9b0">Ports</span><span style="color:#d4d4d4">.</span><span style="color:#9cdcfe">PORT4</span><span style="color:#d4d4d4">,</span> <span style="color:#569cd6">False</span><span style="color:#a0a0a0">)</span>
<span style="color:#9cdcfe">arm_motor</span> <span style="color:#d4d4d4">=</span> <span style="color:#4ec9b0">Motor</span><span style="color:#a0a0a0">(</span><span style="color:#4ec9b0">Ports</span><span style="color:#d4d4d4">.</span><span style="color:#9cdcfe">PORT3</span><span style="color:#d4d4d4">,</span> <span style="color:#569cd6">False</span><span style="color:#a0a0a0">)</span>

<span style="color:#6a9955"># Auxilary motors</span>
<span style="color:#9cdcfe">motor_aux_1</span> <span style="color:#d4d4d4">=</span> <span style="color:#4ec9b0">Motor</span><span style="color:#a0a0a0">(</span><span style="color:#4ec9b0">Ports</span><span style="color:#d4d4d4">.</span><span style="color:#9cdcfe">PORT8</span><span style="color:#d4d4d4">,</span> <span style="color:#569cd6">False</span><span style="color:#a0a0a0">)</span>
<span style="color:#9cdcfe">motor_aux_2</span> <span style="color:#d4d4d4">=</span> <span style="color:#4ec9b0">Motor</span><span style="color:#a0a0a0">(</span><span style="color:#4ec9b0">Ports</span><span style="color:#d4d4d4">.</span><span style="color:#9cdcfe">PORT9</span><span style="color:#d4d4d4">,</span> <span style="color:#569cd6">False</span><span style="color:#a0a0a0">)</span>

<span style="color:#6a9955"># Max motor speed (percent) for motors controlled by buttons</span>
<span style="color:#4fc1ff">MAX_SPEED</span> <span style="color:#d4d4d4">=</span> <span style="color:#b5cea8">50</span>

<span style="color:#6a9955">#</span>
<span style="color:#6a9955"># All motors are controlled from this function which is run as a separate thread</span>
<span style="color:#6a9955">#</span>
<span style="color:#569cd6">def</span> <span style="color:#dcdcaa">drive_task</span><span style="color:#a0a0a0">(</span><span style="color:#a0a0a0">)</span><span style="color:#d4d4d4">:</span>
    <span style="color:#9cdcfe">drive_left</span> <span style="color:#d4d4d4">=</span> <span style="color:#b5cea8">0</span>
    <span style="color:#9cdcfe">drive_right</span> <span style="color:#d4d4d4">=</span> <span style="color:#b5cea8">0</span>

    <span style="color:#6a9955"># setup the claw motor</span>
    <span style="color:#9cdcfe">claw_motor</span><span style="color:#d4d4d4">.</span><span style="color:#dcdcaa">set_max_torque</span><span style="color:#a0a0a0">(</span><span style="color:#b5cea8">25</span><span style="color:#d4d4d4">,</span> <span style="color:#4fc1ff">PERCENT</span><span style="color:#a0a0a0">)</span>
    <span style="color:#9cdcfe">claw_motor</span><span style="color:#d4d4d4">.</span><span style="color:#dcdcaa">set_stopping</span><span style="color:#a0a0a0">(</span><span style="color:#4fc1ff">HOLD</span><span style="color:#a0a0a0">)</span>

    <span style="color:#6a9955"># setup the arm motor</span>
    <span style="color:#9cdcfe">arm_motor</span><span style="color:#d4d4d4">.</span><span style="color:#dcdcaa">set_stopping</span><span style="color:#a0a0a0">(</span><span style="color:#4fc1ff">HOLD</span><span style="color:#a0a0a0">)</span>

    <span style="color:#6a9955"># loop forever</span>
    <span style="color:#c586c0">while</span> <span style="color:#569cd6">True</span><span style="color:#d4d4d4">:</span>
        <span style="color:#6a9955"># buttons</span>
        <span style="color:#6a9955"># Three values, max, 0 and -max.</span>
        <span style="color:#6a9955">#</span>
        <span style="color:#9cdcfe">control_l1</span>  <span style="color:#d4d4d4">=</span> <span style="color:#a0a0a0">(</span><span style="color:#9cdcfe">controller</span><span style="color:#d4d4d4">.</span><span style="color:#9cdcfe">buttonL1</span><span style="color:#d4d4d4">.</span><span style="color:#dcdcaa">pressing</span><span style="color:#a0a0a0">(</span><span style="color:#a0a0a0">)</span> <span style="color:#d4d4d4">-</span> <span style="color:#9cdcfe">controller</span><span style="color:#d4d4d4">.</span><span style="color:#9cdcfe">buttonL2</span><span style="color:#d4d4d4">.</span><span style="color:#dcdcaa">pressing</span><span style="color:#a0a0a0">(</span><span style="color:#a0a0a0">)</span><span style="color:#a0a0a0">)</span> <span style="color:#d4d4d4">*</span> <span style="color:#4fc1ff">MAX_SPEED</span>
        <span style="color:#9cdcfe">control_r1</span>  <span style="color:#d4d4d4">=</span> <span style="color:#a0a0a0">(</span><span style="color:#9cdcfe">controller</span><span style="color:#d4d4d4">.</span><span style="color:#9cdcfe">buttonR1</span><span style="color:#d4d4d4">.</span><span style="color:#dcdcaa">pressing</span><span style="color:#a0a0a0">(</span><span style="color:#a0a0a0">)</span> <span style="color:#d4d4d4">-</span> <span style="color:#9cdcfe">controller</span><span style="color:#d4d4d4">.</span><span style="color:#9cdcfe">buttonR2</span><span style="color:#d4d4d4">.</span><span style="color:#dcdcaa">pressing</span><span style="color:#a0a0a0">(</span><span style="color:#a0a0a0">)</span><span style="color:#a0a0a0">)</span> <span style="color:#d4d4d4">*</span> <span style="color:#4fc1ff">MAX_SPEED</span>
        <span style="color:#9cdcfe">control_l2</span>  <span style="color:#d4d4d4">=</span> <span style="color:#a0a0a0">(</span><span style="color:#9cdcfe">controller</span><span style="color:#d4d4d4">.</span><span style="color:#9cdcfe">buttonUp</span><span style="color:#d4d4d4">.</span><span style="color:#dcdcaa">pressing</span><span style="color:#a0a0a0">(</span><span style="color:#a0a0a0">)</span> <span style="color:#d4d4d4">-</span> <span style="color:#9cdcfe">controller</span><span style="color:#d4d4d4">.</span><span style="color:#9cdcfe">buttonDown</span><span style="color:#d4d4d4">.</span><span style="color:#dcdcaa">pressing</span><span style="color:#a0a0a0">(</span><span style="color:#a0a0a0">)</span><span style="color:#a0a0a0">)</span> <span style="color:#d4d4d4">*</span> <span style="color:#4fc1ff">MAX_SPEED</span>
        <span style="color:#9cdcfe">control_r2</span>  <span style="color:#d4d4d4">=</span> <span style="color:#a0a0a0">(</span><span style="color:#9cdcfe">controller</span><span style="color:#d4d4d4">.</span><span style="color:#9cdcfe">buttonA</span><span style="color:#d4d4d4">.</span><span style="color:#dcdcaa">pressing</span><span style="color:#a0a0a0">(</span><span style="color:#a0a0a0">)</span> <span style="color:#d4d4d4">-</span> <span style="color:#9cdcfe">controller</span><span style="color:#d4d4d4">.</span><span style="color:#9cdcfe">buttonB</span><span style="color:#d4d4d4">.</span><span style="color:#dcdcaa">pressing</span><span style="color:#a0a0a0">(</span><span style="color:#a0a0a0">)</span><span style="color:#a0a0a0">)</span> <span style="color:#d4d4d4">*</span> <span style="color:#4fc1ff">MAX_SPEED</span>

        <span style="color:#6a9955"># joystick tank control</span>
        <span style="color:#9cdcfe">drive_left</span> <span style="color:#d4d4d4">=</span> <span style="color:#9cdcfe">controller</span><span style="color:#d4d4d4">.</span><span style="color:#9cdcfe">axis3</span><span style="color:#d4d4d4">.</span><span style="color:#dcdcaa">position</span><span style="color:#a0a0a0">(</span><span style="color:#a0a0a0">)</span>
        <span style="color:#9cdcfe">drive_right</span> <span style="color:#d4d4d4">=</span> <span style="color:#9cdcfe">controller</span><span style="color:#d4d4d4">.</span><span style="color:#9cdcfe">axis2</span><span style="color:#d4d4d4">.</span><span style="color:#dcdcaa">position</span><span style="color:#a0a0a0">(</span><span style="color:#a0a0a0">)</span>

        <span style="color:#6a9955"># threshold the variable channels so the drive does not</span>
        <span style="color:#6a9955"># move if the joystick axis does not return exactly to 0</span>
        <span style="color:#9cdcfe">deadband</span> <span style="color:#d4d4d4">=</span> <span style="color:#b5cea8">15</span>
        <span style="color:#c586c0">if</span> <span style="color:#dcdcaa">abs</span><span style="color:#a0a0a0">(</span><span style="color:#9cdcfe">drive_left</span><span style="color:#a0a0a0">)</span> <span style="color:#d4d4d4">&lt;</span> <span style="color:#9cdcfe">deadband</span><span style="color:#d4d4d4">:</span>
            <span style="color:#9cdcfe">drive_left</span> <span style="color:#d4d4d4">=</span> <span style="color:#b5cea8">0</span>
        <span style="color:#c586c0">if</span> <span style="color:#dcdcaa">abs</span><span style="color:#a0a0a0">(</span><span style="color:#9cdcfe">drive_right</span><span style="color:#a0a0a0">)</span> <span style="color:#d4d4d4">&lt;</span> <span style="color:#9cdcfe">deadband</span><span style="color:#d4d4d4">:</span>
            <span style="color:#9cdcfe">drive_right</span> <span style="color:#d4d4d4">=</span> <span style="color:#b5cea8">0</span>

        <span style="color:#6a9955"># Now send all drive values to motors</span>

        <span style="color:#6a9955"># The drivetrain</span>
        <span style="color:#9cdcfe">left_drive_1</span><span style="color:#d4d4d4">.</span><span style="color:#dcdcaa">spin</span><span style="color:#a0a0a0">(</span><span style="color:#4fc1ff">FORWARD</span><span style="color:#d4d4d4">,</span> <span style="color:#9cdcfe">drive_left</span><span style="color:#d4d4d4">,</span> <span style="color:#4fc1ff">PERCENT</span><span style="color:#a0a0a0">)</span>
        <span style="color:#9cdcfe">left_drive_2</span><span style="color:#d4d4d4">.</span><span style="color:#dcdcaa">spin</span><span style="color:#a0a0a0">(</span><span style="color:#4fc1ff">FORWARD</span><span style="color:#d4d4d4">,</span> <span style="color:#9cdcfe">drive_left</span><span style="color:#d4d4d4">,</span> <span style="color:#4fc1ff">PERCENT</span><span style="color:#a0a0a0">)</span>
        <span style="color:#9cdcfe">right_drive_1</span><span style="color:#d4d4d4">.</span><span style="color:#dcdcaa">spin</span><span style="color:#a0a0a0">(</span><span style="color:#4fc1ff">FORWARD</span><span style="color:#d4d4d4">,</span> <span style="color:#9cdcfe">drive_right</span><span style="color:#d4d4d4">,</span> <span style="color:#4fc1ff">PERCENT</span><span style="color:#a0a0a0">)</span>
        <span style="color:#9cdcfe">right_drive_2</span><span style="color:#d4d4d4">.</span><span style="color:#dcdcaa">spin</span><span style="color:#a0a0a0">(</span><span style="color:#4fc1ff">FORWARD</span><span style="color:#d4d4d4">,</span> <span style="color:#9cdcfe">drive_right</span><span style="color:#d4d4d4">,</span> <span style="color:#4fc1ff">PERCENT</span><span style="color:#a0a0a0">)</span>

        <span style="color:#6a9955"># Claw and Arm motors</span>
        <span style="color:#9cdcfe">arm_motor</span><span style="color:#d4d4d4">.</span><span style="color:#dcdcaa">spin</span><span style="color:#a0a0a0">(</span><span style="color:#4fc1ff">FORWARD</span><span style="color:#d4d4d4">,</span> <span style="color:#9cdcfe">control_l1</span><span style="color:#d4d4d4">,</span> <span style="color:#4fc1ff">PERCENT</span><span style="color:#a0a0a0">)</span>
        <span style="color:#9cdcfe">claw_motor</span><span style="color:#d4d4d4">.</span><span style="color:#dcdcaa">spin</span><span style="color:#a0a0a0">(</span><span style="color:#4fc1ff">FORWARD</span><span style="color:#d4d4d4">,</span> <span style="color:#9cdcfe">control_r1</span><span style="color:#d4d4d4">,</span> <span style="color:#4fc1ff">PERCENT</span><span style="color:#a0a0a0">)</span>

        <span style="color:#6a9955"># and the auxilary motors</span>
        <span style="color:#9cdcfe">motor_aux_1</span><span style="color:#d4d4d4">.</span><span style="color:#dcdcaa">spin</span><span style="color:#a0a0a0">(</span><span style="color:#4fc1ff">FORWARD</span><span style="color:#d4d4d4">,</span> <span style="color:#9cdcfe">control_l2</span><span style="color:#d4d4d4">,</span> <span style="color:#4fc1ff">PERCENT</span><span style="color:#a0a0a0">)</span>
        <span style="color:#9cdcfe">motor_aux_2</span><span style="color:#d4d4d4">.</span><span style="color:#dcdcaa">spin</span><span style="color:#a0a0a0">(</span><span style="color:#4fc1ff">FORWARD</span><span style="color:#d4d4d4">,</span> <span style="color:#9cdcfe">control_r2</span><span style="color:#d4d4d4">,</span> <span style="color:#4fc1ff">PERCENT</span><span style="color:#a0a0a0">)</span>

        <span style="color:#6a9955"># No need to run too fast</span>
        <span style="color:#dcdcaa">sleep</span><span style="color:#a0a0a0">(</span><span style="color:#b5cea8">10</span><span style="color:#a0a0a0">)</span>

<span style="color:#6a9955"># Run the drive code</span>
<span style="color:#9cdcfe">drive</span> <span style="color:#d4d4d4">=</span> <span style="color:#4ec9b0">Thread</span><span style="color:#a0a0a0">(</span><span style="color:#dcdcaa">drive_task</span><span style="color:#a0a0a0">)</span>

<span style="color:#6a9955"># Python now drops into REPL</span></div><div class="r" style="left:3584px;top:185px;width:152px;height:1.5px;background:#6a9955;opacity:0.45;"></div><div class="r" style="left:3584px;top:213px;width:152px;height:1.5px;background:#6a9955;opacity:0.45;"></div><div class="r" style="left:3812px;top:184px;width:2px;height:1440px;background:#262626;"></div><div class="r" style="left:3814px;top:185px;width:26px;height:3px;background:#a0a0a0;"></div><div class="r" style="left:584px;top:1624px;width:3256px;height:2px;background:#2b2b2b;"></div><div class="r" style="left:584px;top:1626px;width:3256px;height:410px;background:#181818;"></div><div class="t s" style="left:624.50px;top:1649.83px;font-size:20.68px;line-height:26px;color:#9d9d9d;letter-spacing:-1.179px;">PROBLEMS</div><div class="t s" style="left:779.80px;top:1649.83px;font-size:20.68px;line-height:26px;color:#9d9d9d;letter-spacing:-0.780px;">OUTPUT</div><div class="t s" style="left:910.00px;top:1649.83px;font-size:20.68px;line-height:26px;color:#9d9d9d;letter-spacing:-0.825px;">DEBUG CONSOLE</div><div class="t s" style="left:1128.80px;top:1649.83px;font-size:20.68px;line-height:26px;color:#e7e7e7;letter-spacing:-0.379px;">TERMINAL</div><div class="t s" style="left:1278.07px;top:1649.83px;font-size:20.68px;line-height:26px;color:#9d9d9d;letter-spacing:-1.300px;">PORTS</div><div class="r" style="left:1125px;top:1682px;width:110px;height:2px;background:#0078d4;"></div><div class="r" style="left:3677.8px;top:1658.8px;width:4.4px;height:4.4px;border-radius:50%;background:#cccccc;"></div><div class="r" style="left:3687.8px;top:1658.8px;width:4.4px;height:4.4px;border-radius:50%;background:#cccccc;"></div><div class="r" style="left:3697.8px;top:1658.8px;width:4.4px;height:4.4px;border-radius:50%;background:#cccccc;"></div><svg class="r" style="left:3730px;top:1652px;" width="24" height="15" viewBox="0 0 24 15" fill="none"><path d="M2 13.0 L12.0 2 L22.0 13.0" stroke="#cccccc" stroke-width="2.2" fill="none"/></svg><svg class="r" style="left:3783px;top:1650px;" width="22" height="21" viewBox="0 0 22 21" fill="none"><path d="M2 2 L20 19 M20 2 L2 19" stroke="#cccccc" stroke-width="2.2"/></svg><div class="r" style="left:584px;top:1694px;width:46px;height:342px;background:#2b2b2b;"></div><div class="r" style="left:630px;top:1694px;width:3210px;height:44px;background:#2b2b2b;"></div><svg class="r" style="left:599px;top:1702px;" width="15" height="24" viewBox="0 0 15 24" fill="none"><path d="M2 2 L13.5 12.0 L2 22.0" stroke="#cccccc" stroke-width="2.2" fill="none"/></svg><svg class="r" style="left:590px;top:1742px;" width="32" height="32" viewBox="0 0 32 32" fill="none"><path d="M3 9 L9 3 L14 8 L8 14 Z" stroke="#cccccc" stroke-width="2.2" fill="none"/>
      <path d="M8 14 V24 H22 M8 18 H22" stroke="#cccccc" stroke-width="2.2" fill="none"/>
      <path d="M20 15 L25 10 L29 14 L24 19 Z M20 27 L25 22 L29 26 L24 31 Z" stroke="#cccccc" stroke-width="2.2" fill="none"/></svg><svg class="r" style="left:638px;top:1709px;" width="24" height="14" viewBox="0 0 24 14" fill="none"><path d="M2 2 L12.0 12.5 L22.0 2" stroke="#cccccc" stroke-width="2.2" fill="none"/></svg><div class="t s" style="left:670.50px;top:1704.39px;font-size:21.37px;line-height:27px;color:#cccccc;font-weight:700;letter-spacing:0.014px;">TERMINAL</div><div class="t s" style="left:672.00px;top:1765.38px;font-size:26.32px;line-height:33px;color:#cccccc;letter-spacing:-0.650px;">Log</div><div class="r" style="left:2088px;top:1764px;width:26px;height:280px;border:1px solid #0c0c0c;"></div><div class="r" style="left:2116px;top:1738px;width:2px;height:298px;background:#2b2b2b;"></div><div class="t m" style="left:2159.00px;top:1768.08px;font-size:26px;line-height:32px;color:#23d18b;letter-spacing:-0.661px;">EXP Brain (EXP1) Success: Opening COM52</div><div class="r" style="left:2158px;top:1798px;width:11px;height:30px;border:2px solid #cccccc;"></div><div class="r" style="left:3574px;top:1764px;width:26px;height:280px;border:1px solid #0c0c0c;"></div><div class="r" style="left:3603px;top:1738px;width:2px;height:298px;background:#2b2b2b;"></div><svg class="r" style="left:3630px;top:1759px;" width="15" height="20" viewBox="0 0 15 20" fill="none"><path d="M2.5 19.5 V2.5 H13.5" stroke="#cccccc" stroke-width="2.4" fill="none"/></svg><svg class="r" style="left:3650px;top:1745px;" width="32" height="32" viewBox="0 0 48 48" fill="none"><rect x="0" y="0" width="48" height="48" rx="7.7" fill="#ffffff"/><path d="M3.9 13.8 H11.9 L23.9 27.9 L36.4 13.8 H44.1 L28 34.6 H20 Z" fill="#181818"/></svg><div class="t s" style="left:3690.00px;top:1745.43px;font-size:24.44px;line-height:31px;color:#cccccc;letter-spacing:-0.400px;">Log</div><div class="r" style="left:3605px;top:1782px;width:235px;height:44px;background:#37373d;"></div><div class="r" style="left:3604px;top:1782px;width:2px;height:44px;background:#0078d4;"></div><svg class="r" style="left:3629px;top:1788px;" width="16" height="22" viewBox="0 0 16 22" fill="none"><path d="M3 0 V21" stroke="#cccccc" stroke-width="2.6" fill="none"/></svg><svg class="r" style="left:3650px;top:1790px;" width="32" height="32" viewBox="0 0 48 48" fill="none"><rect x="0" y="0" width="48" height="48" rx="7.7" fill="#e8e8e8"/><path d="M3.9 13.8 H11.9 L23.9 27.9 L36.4 13.8 H44.1 L28 34.6 H20 Z" fill="#181818"/></svg><div class="t s" style="left:3690.00px;top:1789.13px;font-size:25.58px;line-height:32px;color:#cccccc;letter-spacing:-0.006px;">Interactiv</div><div class="r" style="left:2914px;top:1804px;width:900px;height:83px;background:#1f1f1f;border:2px solid #303030;border-radius:8px;box-shadow:0 0 16px rgba(0,0,0,0.6);"></div><svg class="r" style="left:2935px;top:1831px;" width="34" height="34" viewBox="0 0 34 34" fill="none"><circle cx="17" cy="17" r="14.5" stroke="#3794ff" stroke-width="2.6"/><rect x="15.6" y="14" width="2.8" height="11" fill="#3794ff"/><rect x="15.6" y="8.5" width="2.8" height="3" fill="#3794ff"/></svg><div class="t s" style="left:2978.80px;top:1834.53px;font-size:24.44px;line-height:31px;color:#cccccc;letter-spacing:-0.176px;">EXP Brain (EXP1) Success: Opening COM52</div><div class="r" style="left:2914px;top:1924px;width:900px;height:83px;background:#1f1f1f;border:2px solid #303030;border-radius:8px;box-shadow:0 0 16px rgba(0,0,0,0.6);"></div><svg class="r" style="left:2935px;top:1951px;" width="34" height="34" viewBox="0 0 34 34" fill="none"><circle cx="17" cy="17" r="14.5" stroke="#3794ff" stroke-width="2.6"/><rect x="15.6" y="14" width="2.8" height="11" fill="#3794ff"/><rect x="15.6" y="8.5" width="2.8" height="3" fill="#3794ff"/></svg><div class="t s" style="left:2978.80px;top:1954.53px;font-size:24.44px;line-height:31px;color:#cccccc;letter-spacing:-0.204px;">EXP Brain (EXP1) Connected</div><div class="r" style="left:0px;top:2036px;width:3840px;height:2px;background:#2b2b2b;"></div><div class="r" style="left:0px;top:2038px;width:3840px;height:43px;background:#181818;"></div><div class="r" style="left:0px;top:2038px;width:68px;height:43px;background:#0078d4;"></div><svg class="r" style="left:20px;top:2043px;" width="28" height="30" viewBox="0 0 28 30" fill="none"><path d="M5.7 10.1 L14 18 L5.7 25.3 M22.2 3.3 L14.6 10.7 L22.2 18.1" stroke="#ffffff" stroke-width="2.2" fill="none"/></svg><svg class="r" style="left:84px;top:2046px;" width="28" height="28" viewBox="0 0 28 28" fill="none"><circle cx="14" cy="14" r="11.5" stroke="#cccccc" stroke-width="2.2"/><path d="M9 9 L19 19 M19 9 L9 19" stroke="#cccccc" stroke-width="2.2"/></svg><div class="t s" style="left:118.80px;top:2044.68px;font-size:24px;line-height:30px;color:#cccccc;">0</div><svg class="r" style="left:139px;top:2046px;" width="27" height="26" viewBox="0 0 27 26" fill="none"><path d="M13.5 2 L25 24 H2 Z" stroke="#cccccc" stroke-width="2.2" stroke-linejoin="round" fill="none"/><path d="M13.5 9 V17 M13.5 19.5 V22" stroke="#cccccc" stroke-width="2.4"/></svg><div class="t s" style="left:173.00px;top:2044.68px;font-size:24px;line-height:30px;color:#cccccc;">0</div><svg class="r" style="left:219px;top:2045px;" width="28" height="28" viewBox="0 0 28 28" fill="none"><path d="M14 13 L8 26 M14 13 L20 26 M10 21 H18" stroke="#cccccc" stroke-width="2.2" fill="none"/>
      <circle cx="14" cy="11" r="2.5" fill="#cccccc"/><path d="M8 5 Q5 11 8 17 M20 5 Q23 11 20 17 M4 2 Q-1 11 4 20 M24 2 Q29 11 24 20" stroke="#cccccc" stroke-width="2" fill="none"/></svg><div class="t s" style="left:252.70px;top:2044.68px;font-size:24px;line-height:30px;color:#cccccc;">0</div><svg class="r" style="left:297px;top:2050px;" width="29" height="22" viewBox="0 0 32 24" fill="none"><rect x="0" y="0" width="32" height="24" rx="2.5" fill="#cccccc"/><rect x="6" y="1.6" width="2" height="2" fill="#111"/><rect x="6" y="20.4" width="2" height="2" fill="#111"/><rect x="9" y="1.6" width="2" height="2" fill="#111"/><rect x="9" y="20.4" width="2" height="2" fill="#111"/><rect x="12" y="1.6" width="2" height="2" fill="#111"/><rect x="12" y="20.4" width="2" height="2" fill="#111"/><rect x="15" y="1.6" width="2" height="2" fill="#111"/><rect x="15" y="20.4" width="2" height="2" fill="#111"/><rect x="18" y="1.6" width="2" height="2" fill="#111"/><rect x="18" y="20.4" width="2" height="2" fill="#111"/><rect x="2.2" y="5.0" width="3" height="1" fill="#555"/><rect x="2.2" y="7.4" width="3" height="1" fill="#555"/><rect x="2.2" y="9.8" width="3" height="1" fill="#555"/><rect x="2.2" y="12.2" width="3" height="1" fill="#555"/><rect x="2.2" y="14.6" width="3" height="1" fill="#555"/><rect x="2.2" y="17.0" width="3" height="1" fill="#555"/>
<rect x="8" y="8" width="11" height="9" fill="#1a1a1a"/>
<path d="M24.5 9.5 L26 11 L24.5 12.5 L23 11 Z M24.5 12.5 L26 14 L24.5 15.5 L23 14 Z M22 11 L23.5 12.5 L22 14 L20.5 12.5 Z M27 11 L28.5 12.5 L27 14 L25.5 12.5 Z" fill="#1a1a1a"/></svg><div class="t s" style="left:333.00px;top:2046.18px;font-size:22.56px;line-height:28px;color:#cccccc;letter-spacing:-0.770px;">EXP Brain (EXP1)</div><svg class="r" style="left:536px;top:2043px;" width="31" height="30" viewBox="0 0 31 30" fill="none"><rect x="1" y="7" width="22" height="22" fill="#cccccc"/><path d="M6 6 V2 H29 V24 H24" stroke="#cccccc" stroke-width="2.2" fill="none"/></svg><div class="t s" style="left:572.50px;top:2046.11px;font-size:22.77px;line-height:28px;color:#cccccc;letter-spacing:0.010px;">Slot 1</div><svg class="r" style="left:663px;top:2043px;" width="33" height="28" viewBox="0 0 33 28" fill="none"><path d="M13 2 H20 V12 H25 L16.5 20 L8 12 H13 Z" fill="#cccccc"/>
      <path d="M2 17 H8 L16.5 25 L25 17 H31 V25 Q31 27 29 27 H4 Q2 27 2 25 Z" fill="#cccccc"/><circle cx="8" cy="23" r="1.6" fill="#181818"/><circle cx="25" cy="23" r="1.6" fill="#181818"/></svg><svg class="r" style="left:722px;top:2043px;" width="28" height="30" viewBox="0 0 28 30" fill="none"><path d="M2 2 L26 15 L2 28 Z" fill="#cccccc"/></svg><div class="r" style="left:779px;top:2044px;width:29px;height:28px;background:#cccccc;border-radius:4px;"></div><div class="t s" style="left:840.80px;top:2046.18px;font-size:22.56px;line-height:28px;color:#cccccc;letter-spacing:-0.178px;">EXPClawbot</div><svg class="r" style="left:1003px;top:2050px;" width="17" height="17" viewBox="0 0 24 24" fill="none">
<path d="M11.9 0.6C6.1 0.6 6.5 3.1 6.5 3.1V5.7H12V6.5H4.3C4.3 6.5 0.6 6.1 0.6 11.9C0.6 17.7 3.8 17.5 3.8 17.5H5.8V14.8C5.8 14.8 5.7 11.6 9 11.6H14.5C14.5 11.6 17.6 11.6 17.6 8.6V3.6C17.6 3.6 18 0.6 11.9 0.6Z" fill="#cccccc"/>
<path d="M12.1 23.4C17.9 23.4 17.5 20.9 17.5 20.9V18.3H12V17.5H19.7C19.7 17.5 23.4 17.9 23.4 12.1C23.4 6.3 20.2 6.5 20.2 6.5H18.2V9.2C18.2 9.2 18.3 12.4 15 12.4H9.5C9.5 12.4 6.4 12.4 6.4 15.4V20.4C6.4 20.4 6 23.4 12.1 23.4Z" fill="#cccccc"/>
</svg><div class="t s" style="left:1026.50px;top:2045.38px;font-size:23.41px;line-height:29px;color:#cccccc;letter-spacing:0.008px;">main.py</div><div class="t s" style="left:2912.80px;top:2046.18px;font-size:22.56px;line-height:28px;color:#cccccc;letter-spacing:-0.085px;">Ln 1, Col 1</div><div class="t s" style="left:3055.00px;top:2046.18px;font-size:22.56px;line-height:28px;color:#cccccc;letter-spacing:-0.412px;">Spaces: 4</div><div class="t s" style="left:3185.00px;top:2046.18px;font-size:22.56px;line-height:28px;color:#cccccc;letter-spacing:-0.475px;">UTF-8</div><div class="t s" style="left:3278.50px;top:2046.18px;font-size:22.56px;line-height:28px;color:#cccccc;letter-spacing:-1.300px;">LF</div><div class="t s" style="left:3334.00px;top:2046.18px;font-size:22.56px;line-height:28px;color:#cccccc;letter-spacing:-0.175px;">{ }</div><div class="t s" style="left:3371.00px;top:2044.79px;font-size:23.68px;line-height:30px;color:#cccccc;letter-spacing:-0.020px;">Python</div><div class="t s" style="left:3473.70px;top:2044.81px;font-size:23.61px;line-height:30px;color:#cccccc;letter-spacing:0.008px;">3.12.2 64-bit</div><div class="t s" style="left:3672.00px;top:2046.18px;font-size:22.56px;line-height:28px;color:#cccccc;letter-spacing:-0.033px;">Go Live</div><svg class="r" style="left:3638px;top:2045px;" width="26" height="28" viewBox="0 0 26 28" fill="none"><circle cx="13" cy="11" r="3" stroke="#cccccc" stroke-width="2"/><path d="M13 14 V27" stroke="#cccccc" stroke-width="3"/><path d="M7 17 A8.5 8.5 0 1 1 19 17" stroke="#cccccc" stroke-width="2" fill="none"/></svg><svg class="r" style="left:3784px;top:2043px;" width="34" height="32" viewBox="0 0 34 32" fill="none"><path d="M15 4 Q6 4 6 14 V21 L3 25 H27 L24 21 V14" stroke="#cccccc" stroke-width="2.2" fill="none"/>
      <path d="M11 27 Q15 31 19 27" stroke="#cccccc" stroke-width="2.2" fill="none"/><circle cx="26" cy="7" r="5.5" fill="#cccccc"/></svg></body></html>
